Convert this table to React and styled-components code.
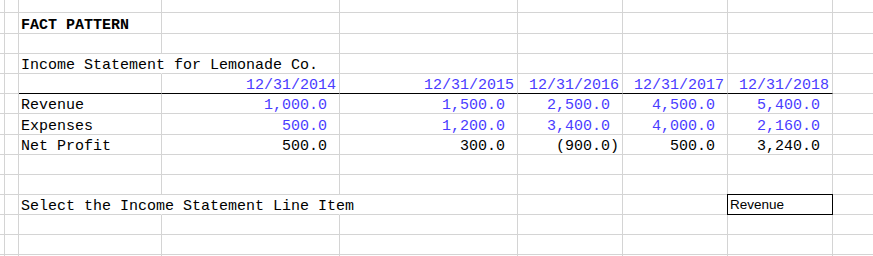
import React from 'react';
import styled, { createGlobalStyle } from 'styled-components';

const GRID = '#d4d4d4';
const BLUE = '#4a3cff';

const Global = createGlobalStyle`
  html, body { margin: 0; padding: 0; background: #fff; overflow: hidden; }
  #root { width: 873px; height: 256px; overflow: hidden; }
`;

const Sheet = styled.div`
  display: grid;
  grid-template-columns: 3px 16px 143px 178px 178px 105px 105px 105px 200px;
  grid-template-rows: 13px 21px 20px 20px 20px 20px 21px 20px 20px 20px 20px 20px 20px 20px;
  width: 1033px;
  background: #fff;
  font-family: "Liberation Mono", "Courier New", monospace;
  font-size: 15px;
  line-height: 14px;
`;

const Cell = styled.div`
  box-sizing: border-box;
  min-width: 0;
  display: flex;
  align-items: flex-end;
  justify-content: ${(p) => (p.$align === 'right' ? 'flex-end' : 'flex-start')};
  padding: 0 ${(p) => p.$pad}px 0 2px;
  border-right: 1px solid ${(p) => (p.$spill ? 'transparent' : GRID)};
  border-bottom: 1px solid ${(p) => (p.$rule ? '#000' : GRID)};
  white-space: nowrap;
  overflow: visible;
  color: ${(p) => p.$color};
  font-weight: ${(p) => (p.$bold ? 700 : 400)};
`;

const Dropdown = styled.div`
  box-sizing: border-box;
  margin: -1px 0 0 -1px;
  z-index: 1;
  display: flex;
  align-items: flex-end;
  padding: 0 0 2px 2px;
  border: 1px solid #000;
  background: #fff;
  font-family: "Liberation Sans", Arial, sans-serif;
  font-size: 13.5px;
  line-height: 15px;
  color: #000;
  white-space: nowrap;
`;

const label = (text, extra = {}) => ({ text, ...extra });
const date = (text) => ({ text, align: 'right', pad: 3, color: BLUE, rule: true });
const num = (text, color = '#000') => ({
  text,
  align: 'right',
  pad: text.endsWith(')') ? 3 : 12,
  color,
});

const ROWS = [
  [],
  [null, null, label('FACT PATTERN', { bold: true })],
  [],
  [null, null, label('Income Statement for Lemonade Co.', { spill: true })],
  [
    null,
    null,
    { rule: true },
    date('12/31/2014'),
    date('12/31/2015'),
    date('12/31/2016'),
    date('12/31/2017'),
    date('12/31/2018'),
  ],
  [
    null,
    null,
    label('Revenue'),
    num('1,000.0', BLUE),
    num('1,500.0', BLUE),
    num('2,500.0', BLUE),
    num('4,500.0', BLUE),
    num('5,400.0', BLUE),
  ],
  [
    null,
    null,
    label('Expenses'),
    num('500.0', BLUE),
    num('1,200.0', BLUE),
    num('3,400.0', BLUE),
    num('4,000.0', BLUE),
    num('2,160.0', BLUE),
  ],
  [
    null,
    null,
    label('Net Profit'),
    num('500.0'),
    num('300.0'),
    num('(900.0)'),
    num('500.0'),
    num('3,240.0'),
  ],
  [],
  [],
  [
    null,
    null,
    label('Select the Income Statement Line Item', { spill: true }),
    { spill: true },
    null,
    null,
    null,
    { dropdown: 'Revenue' },
  ],
  [],
  [],
  [],
];

const NCOLS = 9;

export default function App() {
  return (
    <>
      <Global />
      <Sheet>
        {ROWS.map((row, r) =>
          Array.from({ length: NCOLS }, (_, c) => {
            const cell = row[c] || {};
            if (cell.dropdown) {
              return <Dropdown key={`${r}-${c}`}>{cell.dropdown}</Dropdown>;
            }
            return (
              <Cell
                key={`${r}-${c}`}
                $align={cell.align}
                $pad={cell.pad ?? 2}
                $spill={cell.spill}
                $rule={cell.rule}
                $bold={cell.bold}
                $color={cell.color || '#000'}
              >
                {cell.text}
              </Cell>
            );
          })
        )}
      </Sheet>
    </>
  );
}
